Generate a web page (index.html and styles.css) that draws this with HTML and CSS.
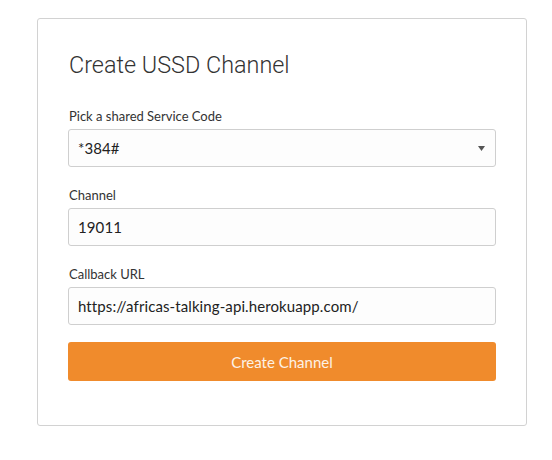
FILE: index.html
```html
<!DOCTYPE html>
<html>
<head>
<meta charset="utf-8">
<link rel="stylesheet" href="styles.css">
</head>
<body>
<div class="card">
  <h1 class="title">Create USSD Channel</h1>
  <div class="field">
    <label class="label">Pick a shared Service Code</label>
    <div class="control select">
      <span class="value">*384#</span>
      <svg class="caret" width="7" height="5" viewBox="0 0 7 5"><path d="M0 0H7L3.5 5Z" fill="#555"/></svg>
    </div>
  </div>
  <div class="field">
    <label class="label">Channel</label>
    <div class="control"><span class="value">19011</span></div>
  </div>
  <div class="field">
    <label class="label">Callback URL</label>
    <div class="control"><span class="value">https://africas-talking-api.herokuapp.com/</span></div>
  </div>
  <div class="button">Create Channel</div>
</div>
</body>
</html>
```
FILE: styles.css
```css
html, body {
  margin: 0;
  padding: 0;
  background: #ffffff;
}
body {
  font-family: "Lato", "Liberation Sans", sans-serif;
  color: #333;
}
.card {
  box-sizing: border-box;
  margin: 18px 0 0 37px;
  width: 490px;
  height: 408px;
  border: 1px solid #d2d2d2;
  border-radius: 3px;
  padding: 32px 30px 0 30px;
}
.title {
  margin: 0 0 29px 1px;
  font-family: "Roboto", sans-serif;
  font-weight: 300;
  font-size: 23.4px;
  line-height: 28px;
  color: #333;
}
.field {
  display: flex;
  flex-direction: column;
  margin-bottom: 20px;
}
.label {
  font-size: 13px;
  line-height: 16px;
  margin: 0 0 5px 1px;
  color: #333;
}
.control {
  box-sizing: border-box;
  height: 38px;
  border: 1px solid #cfcfcf;
  border-radius: 3px;
  background: #fdfdfd;
  padding: 0 9px;
  display: flex;
  align-items: center;
  justify-content: space-between;
  font-size: 15px;
  letter-spacing: 0.1px;
  color: #222;
}
.caret {
  display: block;
  margin-right: 1px;
}
.button {
  margin-top: -3px;
  height: 39px;
  border-radius: 3px;
  background: #f08b2c;
  color: #fdf2e6;
  font-size: 15px;
  display: flex;
  align-items: center;
  justify-content: center;
}
```
